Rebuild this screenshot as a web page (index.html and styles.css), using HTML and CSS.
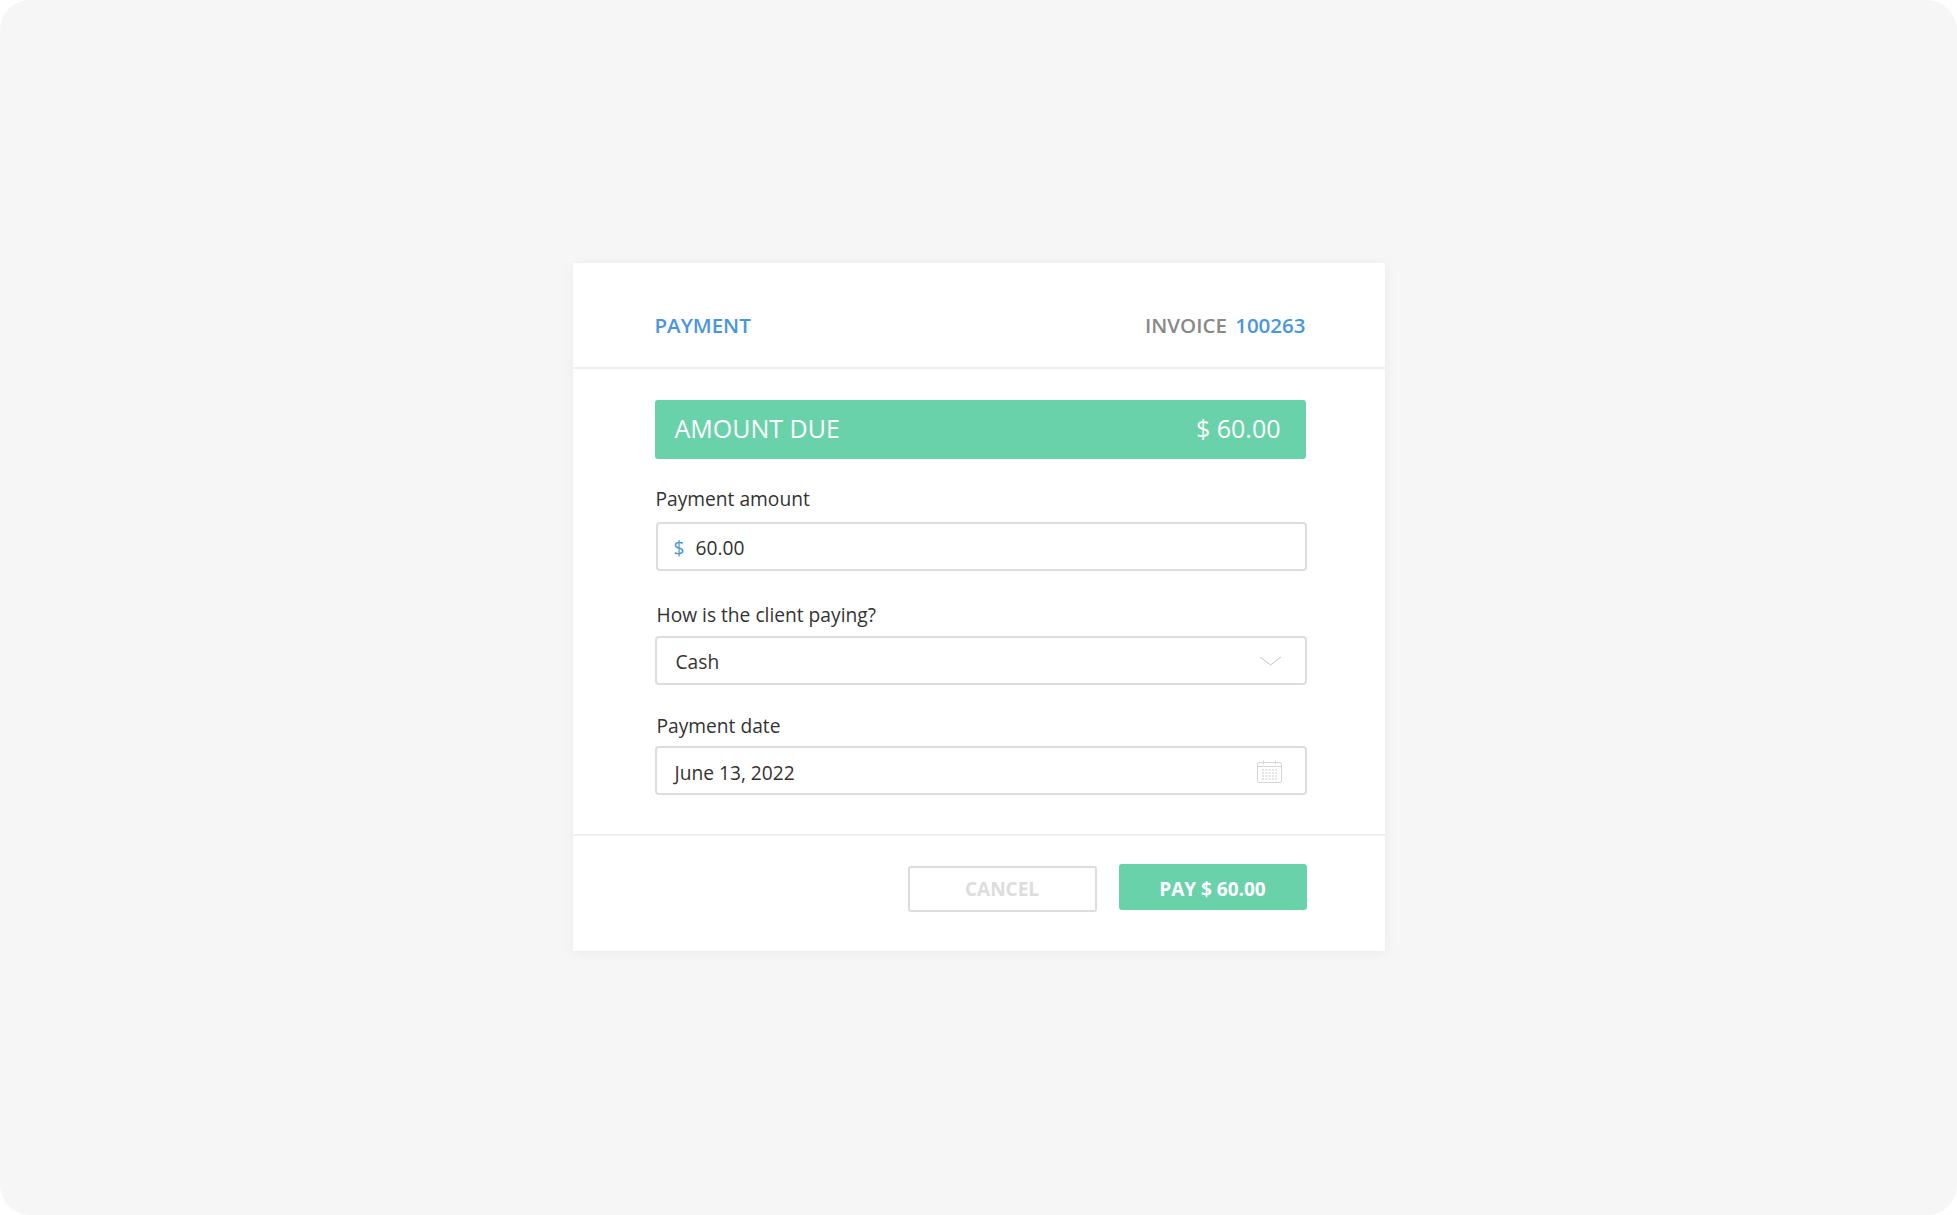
FILE: index.html
```html
<!DOCTYPE html>
<html lang="en">
<head>
    <meta charset="UTF-8">
    <meta name="viewport" content="width=device-width, initial-scale=1.0">
    <title>Payment</title>
    <link rel="stylesheet" href="styles.css">
</head>
<body>
    <div class="screen">
        <div class="card">
            <div class="card-header">
                <span class="card-title">PAYMENT</span>
                <span class="invoice">INVOICE <span class="invoice-number">100263</span></span>
            </div>
            <div class="card-body">
                <div class="amount-due">
                    <span>AMOUNT DUE</span>
                    <span>$ 60.00</span>
                </div>

                <div class="field field-amount">
                    <label>Payment amount</label>
                    <div class="input">
                        <span class="currency">$</span>
                        <span>60.00</span>
                    </div>
                </div>

                <div class="field field-method">
                    <label>How is the client paying?</label>
                    <div class="input input-select">
                        <span>Cash</span>
                        <svg class="chevron" width="23" height="10" viewBox="0 0 23 10" fill="none">
                            <path d="M1 1l10.5 8L22 1" stroke="#c4c4c4" stroke-width="1"/>
                        </svg>
                    </div>
                </div>

                <div class="field field-date">
                    <label>Payment date</label>
                    <div class="input input-date">
                        <span>June 13, 2022</span>
                        <svg class="calendar" width="25" height="23" viewBox="0 0 25 23" fill="none">
                            <rect x="0.5" y="2.5" width="24" height="20" rx="1.5" stroke="#d6d6d6"/>
                            <path d="M0.5 6.5h24M6.5 0.5v4M18.5 0.5v4" stroke="#d6d6d6"/>
                            <path d="M5 10h15M5 13h15M5 16h15M5 19h15" stroke="#dcdcdc" stroke-width="1.6" stroke-dasharray="2 1.3"/>
                        </svg>
                    </div>
                </div>
            </div>
            <div class="card-footer">
                <button class="btn btn-cancel">CANCEL</button>
                <button class="btn btn-pay">PAY $ 60.00</button>
            </div>
        </div>
    </div>
</body>
</html>
```

FILE: styles.css
```css
body {
    margin: 0;
    background-color: #fff;
    font-family: "Open Sans", Arial, sans-serif;
    color: #333;
}

.screen {
    height: 100vh;
    box-sizing: border-box;
    padding-bottom: 2px;
    background-color: #f6f6f6;
    border-radius: 30px;
    display: flex;
    justify-content: center;
    align-items: center;
}

.card {
    width: 812px;
    height: 688px;
    background-color: #fff;
    box-shadow: 0 2px 12px rgba(0, 0, 0, 0.05);
    display: flex;
    flex-direction: column;
}

.card-header {
    height: 83px;
    padding: 21px 79px 0 82px;
    border-bottom: 2px solid #efefef;
    display: flex;
    justify-content: space-between;
    align-items: center;
    font-size: 20.5px;
    font-weight: 600;
}

.card-title,
.invoice-number {
    color: #4a96db;
}

.invoice {
    color: #888;
    word-spacing: 3px;
}

.card-body {
    padding: 31px 79px 39px 82px;
    border-bottom: 2px solid #efefef;
}

.amount-due {
    height: 59px;
    box-sizing: border-box;
    padding: 0 25px 2px 20px;
    background-color: #6ad2aa;
    border-radius: 3px;
    color: #fff;
    font-size: 25px;
    display: flex;
    justify-content: space-between;
    align-items: center;
}

.field label {
    display: block;
    line-height: 28px;
    font-size: 19.2px;
}

.field-amount {
    margin: 27px -1px 0 1px;
}

.field-amount label {
    margin: -1px 0 9px 0;
}

.field-method {
    margin: 31px -1px 0 0;
}

.field-method label {
    margin: -1px 0 7px 2px;
}

.field-date {
    margin: 27px -1px 0 0;
}

.field-date label {
    margin: 0 0 6px 2px;
}

.input {
    height: 49px;
    box-sizing: border-box;
    padding: 3px 18px 0 16px;
    background-color: #fff;
    border: 2px solid #dddddd;
    border-radius: 4px;
    font-size: 19.2px;
    display: flex;
    align-items: center;
}

.currency {
    color: #4a96db;
    margin-right: 11px;
}

.input-select {
    padding-left: 19px;
    justify-content: space-between;
}

.input-date {
    padding: 4px 18px 0 18px;
    justify-content: space-between;
}

.chevron {
    margin: -1px 5px 0 0;
}

.calendar {
    margin: -2px 5px 0 0;
}

.card-footer {
    padding: 28px 78px 0 0;
    display: flex;
    justify-content: flex-end;
    align-items: flex-start;
    gap: 22px;
}

.btn {
    width: 188px;
    height: 46px;
    padding: 0;
    border: none;
    border-radius: 3px;
    font-family: inherit;
    font-size: 19px;
    font-weight: 700;
}

.btn-cancel {
    width: 189px;
    margin-top: 2px;
    background-color: #fff;
    border: 2px solid #dddddd;
    color: #ddd;
}

.btn-pay {
    padding-top: 4px;
    background-color: #6ad2aa;
    color: #fff;
}
```
